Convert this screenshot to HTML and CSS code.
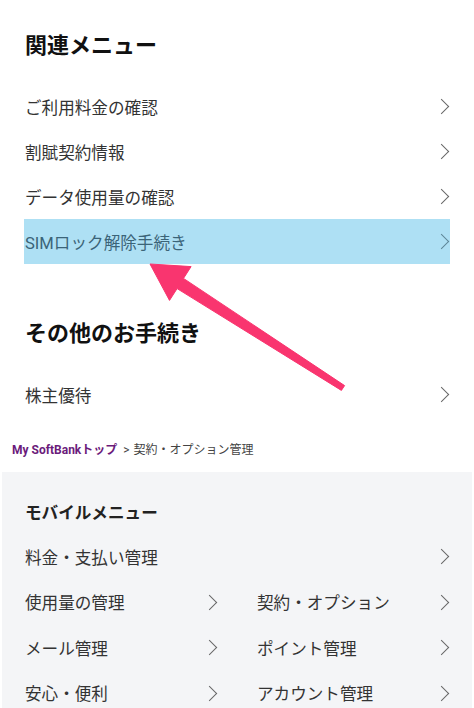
FILE: index.html
```html
<!doctype html>
<html lang="ja">
  <head>
    <meta charset="utf-8">
    <meta name="viewport" content="width=device-width, initial-scale=1.0">
    <title>契約・オプション管理</title>
    <link rel="stylesheet" href="styles.css">
  </head>
  <body>
    <section class="related">
      <h2>関連メニュー</h2>
      <ul class="menu">
        <li class="menu-item"><span>ご利用料金の確認</span><i class="chev"></i></li>
        <li class="menu-item"><span>割賦契約情報</span><i class="chev"></i></li>
        <li class="menu-item"><span>データ使用量の確認</span><i class="chev"></i></li>
        <li class="menu-item highlight"><span>SIMロック解除手続き</span><i class="chev"></i></li>
      </ul>
      <h2 class="other">その他のお手続き</h2>
      <ul class="menu">
        <li class="menu-item"><span>株主優待</span><i class="chev"></i></li>
      </ul>
    </section>

    <nav class="breadcrumb">
      <a href="#">My SoftBankトップ</a>
      <span class="sep">&gt;</span>
      <span>契約・オプション管理</span>
    </nav>

    <section class="mobile">
      <h3>モバイルメニュー</h3>
      <ul class="grid">
        <li class="menu-item wide"><span>料金・支払い管理</span><i class="chev"></i></li>
        <li class="menu-item"><span>使用量の管理</span><i class="chev"></i></li>
        <li class="menu-item"><span>契約・オプション</span><i class="chev"></i></li>
        <li class="menu-item"><span>メール管理</span><i class="chev"></i></li>
        <li class="menu-item"><span>ポイント管理</span><i class="chev"></i></li>
        <li class="menu-item"><span>安心・便利</span><i class="chev"></i></li>
        <li class="menu-item"><span>アカウント管理</span><i class="chev"></i></li>
      </ul>
    </section>

    <!-- annotation arrow drawn over the page -->
    <svg class="arrow" width="474" height="708" viewBox="0 0 474 708" aria-hidden="true">
      <polygon points="150,264 191.1,266.6 183.5,278.4 344.6,385.6 341.4,390.4 177.1,288.6 169.5,300.4" fill="#f9356f" stroke="#f9356f" stroke-width="1" stroke-linejoin="round"/>
    </svg>
  </body>
</html>
```

FILE: styles.css
```css
body {
  background: white;
  color: #333;
  font-family: Roboto, "Noto Sans CJK JP", sans-serif;
  margin: 0;
  position: relative;
  width: 474px;
  height: 708px;
  overflow: hidden;
}
ul {
  list-style: none;
  margin: 0;
  padding: 0;
}
h2 {
  color: #111;
  font-size: 22px;
  font-weight: bold;
  line-height: 30px;
  margin: 0 0 23px;
  padding-left: 1px;
}
.related {
  padding: 31px 24px 0;
}
.related h2.other {
  margin-top: 55px;
}
.menu-item {
  align-items: center;
  display: flex;
  font-size: 16.6px;
  height: 45px;
  justify-content: space-between;
  padding-left: 1px;
}
.menu-item.highlight {
  background: #aee0f4;
  color: #3b6478;
}
  .menu-item.highlight .chev {
    border-color: #5d8596;
  }
/* chevron: top-right corner of a rotated square */
.chev {
  border-right: 1.5px solid #666;
  border-top: 1.5px solid #666;
  display: block;
  height: 10px;
  margin-right: 3px;
  transform: rotate(45deg);
  width: 10px;
}
.breadcrumb {
  font-size: 12px;
  line-height: 20px;
  margin-top: 23px;
  padding-left: 12px;
  color: #444;
}
  .breadcrumb a {
    color: #6b1b7b;
    font-weight: bold;
    text-decoration: none;
  }
  .breadcrumb .sep {
    margin: 0 1px 0 3px;
  }
.mobile {
  background: #f4f5f7;
  margin: 12px 2px 0;
  padding: 30px 22px 0;
  min-height: 240px;
}
  .mobile h3 {
    color: #222;
    font-size: 16.6px;
    font-weight: 600;
    line-height: 24px;
    margin: 0 0 8px;
    padding-left: 1px;
  }
.grid {
  column-gap: 38px;
  display: grid;
  grid-template-columns: 1fr 1fr;
}
  .grid .wide {
    grid-column: 1 / -1;
  }
  .grid .menu-item {
    height: 45.5px;
  }
.arrow {
  left: 0;
  pointer-events: none;
  position: absolute;
  top: 0;
}
```
